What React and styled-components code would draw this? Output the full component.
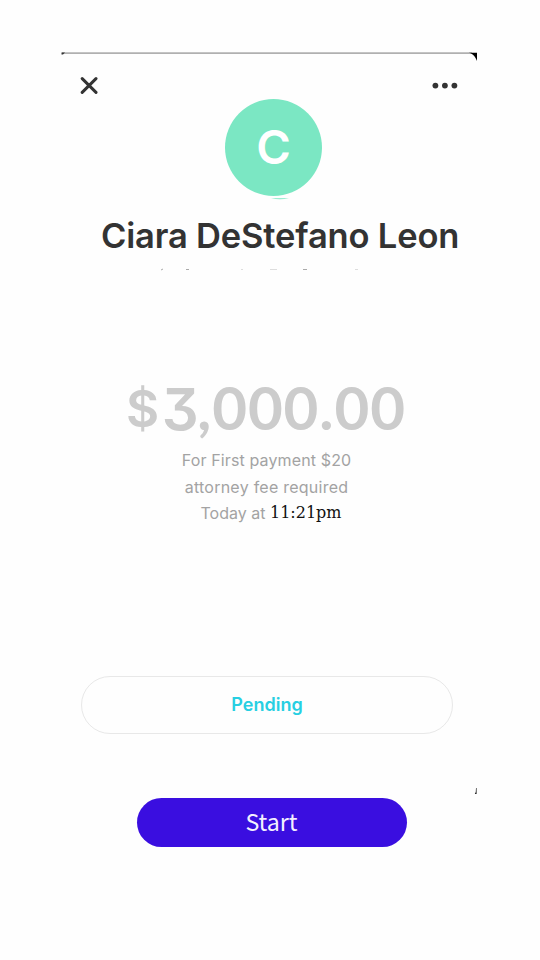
import React from 'react';
import styled, { createGlobalStyle } from 'styled-components';

const App = () => {
  return (
    <>
      <GlobalStyle />
      <Screen>
        <Card>
          <TopEdge viewBox="0 0 416 12">
            <path d="M1 1.1H411" stroke="#b0b0b0" strokeWidth="1.6" />
            <path d="M0.5 0.6H4L2 2.4H0.5Z" fill="#333" />
            <path d="M408 0.7H416V9C414.8 5.5 412.5 2 408 0.7Z" fill="#000" />
          </TopEdge>
          <Header>
            <IconButton aria-label="Close">
              <svg width="18" height="18" viewBox="0 0 18 18">
                <path
                  d="M2.2 1.6L16 15.4M16 1.6L2.2 15.4"
                  stroke="#333"
                  strokeWidth="3"
                  strokeLinecap="round"
                />
              </svg>
            </IconButton>
            <IconButton aria-label="More">
              <svg width="26" height="8" viewBox="0 0 26 8">
                <g fill="#333">
                  <circle cx="3.4" cy="3.6" r="2.9" />
                  <circle cx="12.9" cy="3.6" r="2.9" />
                  <circle cx="22.4" cy="3.6" r="2.9" />
                </g>
              </svg>
            </IconButton>
          </Header>
          <Avatar>C</Avatar>
          <AvatarSliver viewBox="0 0 20 3">
            <path d="M1 1.2Q10 3.2 19 1.2Z" fill="#7be7c3" />
          </AvatarSliver>
          <Name>Ciara DeStefano Leon</Name>
          <Handle viewBox="0 0 202 3" strokeWidth="1">
            <path d="M1 2L3 1M26 1.5H29M143 1.5H147" stroke="#aaa" />
            <path d="M81 1.5H83M110 1.5H117M195 1.5H198" stroke="#ddd" />
          </Handle>
          <Amount>
            <Currency>$</Currency>
            <FlatThree>3</FlatThree>,000.00
          </Amount>
          <Note>
            <NoteLine $spacing="0.13px">For First payment $20</NoteLine>
            <NoteLine $spacing="0.25px">attorney fee required</NoteLine>
            <NoteLine $indent="9px">
              Today at <Time>11:21pm</Time>
            </NoteLine>
          </Note>
          <Status>Pending</Status>
          <BottomCorner viewBox="0 0 3 8">
            <path d="M2.6 1V7H0.8Q2.2 5 2 1Z" fill="#222" />
          </BottomCorner>
        </Card>
        <StartButton>Start</StartButton>
      </Screen>
    </>
  );
};

const GlobalStyle = createGlobalStyle`
  * {
    box-sizing: border-box;
  }

  body {
    margin: 0;
    background: #fefefe;
  }

  svg {
    display: block;
    fill: none;
  }
`;

const Screen = styled.main`
  display: flex;
  flex-direction: column;
  width: 540px;
  height: 960px;
  padding: 52px 0 0 61px;
  overflow: hidden;
  font-family: Inter, 'Liberation Sans', sans-serif;
`;

const Card = styled.section`
  display: flex;
  flex-direction: column;
  width: 416px;
  height: 743px;
`;

const TopEdge = styled.svg`
  width: 416px;
  height: 12px;
`;

const Header = styled.header`
  display: flex;
  align-items: center;
  justify-content: space-between;
  height: 44px;
  margin-bottom: -9px;
  padding: 0 19px;
`;

const IconButton = styled.button`
  display: flex;
  padding: 0;
  border: none;
  background: none;
  cursor: pointer;
`;

const Avatar = styled.div`
  display: flex;
  align-items: center;
  justify-content: center;
  width: 97px;
  height: 97px;
  margin-left: 164px;
  padding-bottom: 2px;
  border-radius: 50%;
  background: #7be7c3;
  color: #fff;
  font-size: 47px;
  font-weight: 600;
  line-height: 1;
`;

const AvatarSliver = styled.svg`
  width: 20px;
  height: 3px;
  margin: 1px 0 0 209px;
`;

const Name = styled.h1`
  width: 400px;
  height: 48px;
  margin: 12px 0 0 40px;
  color: #333;
  font-size: 34.5px;
  font-weight: 600;
  letter-spacing: -0.17px;
  line-height: 48px;
  white-space: nowrap;
`;

const Handle = styled.svg`
  width: 202px;
  height: 3px;
  margin: 8px 0 0 99px;
`;

const Amount = styled.div`
  width: 300px;
  height: 76px;
  margin: 98px 0 0 65px;
  color: #ccc;
  font-family: Lato, sans-serif;
  font-size: 60px;
  font-weight: 700;
  letter-spacing: 0.9px;
  line-height: 76px;
  white-space: nowrap;
`;

const Currency = styled.span`
  font-family: Inter, sans-serif;
  font-size: 51px;
  font-weight: 600;
  letter-spacing: 2.5px;
  line-height: 1;
  vertical-align: 3px;
`;

const FlatThree = styled.span`
  font-family: Inter, sans-serif;
  font-size: 58px;
  font-weight: 600;
  font-feature-settings: 'cv09' 1;
  letter-spacing: -1.4px;
  line-height: 1;
`;

const Note = styled.div`
  width: 411px;
  margin-top: 2px;
  text-align: center;
`;

const NoteLine = styled.p`
  height: 26.5px;
  margin: 0;
  padding-left: ${(props) => props.$indent || '0'};
  color: #a3a3a3;
  font-size: 16px;
  letter-spacing: ${(props) => props.$spacing || '0'};
  line-height: 26.5px;
`;

const Time = styled.span`
  color: #111;
  font-family: 'DejaVu Serif', serif;
  font-size: 16px;
  line-height: 1;
  vertical-align: 1px;
`;

const Status = styled.button`
  width: 372px;
  height: 58px;
  margin: 149px 0 0 20px;
  padding: 0;
  border: 1.5px solid #e8e8e8;
  border-radius: 29px;
  background: transparent;
  color: #27cfe2;
  font-family: inherit;
  font-size: 18px;
  font-weight: 600;
`;

const BottomCorner = styled.svg`
  width: 3px;
  height: 8px;
  margin: 53px 0 0 413px;
`;

const StartButton = styled.button`
  width: 270px;
  height: 49px;
  margin: 3px 0 0 76px;
  padding: 0 1px 2px 0;
  border: none;
  border-radius: 25px;
  background: #3a0ee0;
  color: #f3efff;
  font-family: 'Noto Sans CJK SC', sans-serif;
  font-size: 23.2px;
  line-height: 47px;
`;

export default App;
